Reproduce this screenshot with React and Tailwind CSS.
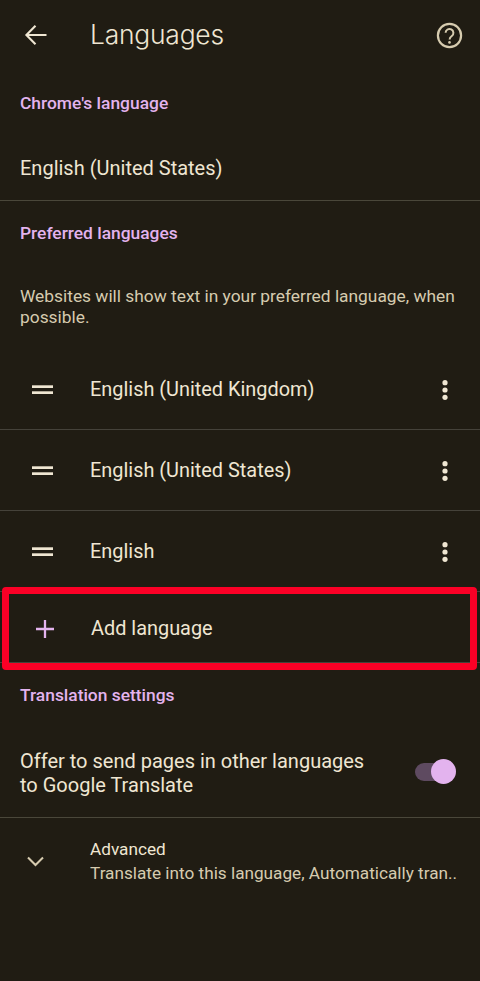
import React from "react";

const SectionTitle = ({ children, className = "" }) => (
  <h2 className={`px-5 text-[17.4px] leading-5 font-medium text-[#e3b3ee] ${className}`}>{children}</h2>
);

const DragHandle = () => (
  <svg width="22" height="10" viewBox="0 0 22 10" fill="#efe6d2">
    <rect x="0" y="0.3" width="21" height="2.7" />
    <rect x="0" y="6.3" width="21" height="2.7" />
  </svg>
);

const MoreIcon = () => (
  <svg width="6" height="20" viewBox="0 0 6 20" fill="#efe6d2">
    <circle cx="3" cy="2.7" r="2.6" />
    <circle cx="3" cy="10" r="2.6" />
    <circle cx="3" cy="17.3" r="2.6" />
  </svg>
);

const LanguageRow = ({ label }) => (
  <div className="h-[81px] flex items-center border-b border-[#45423a] pt-[1px]">
    <div className="w-[90px] pl-[32px] flex items-center">
      <DragHandle />
    </div>
    <span className="flex-1 text-[19.9px] text-[#efe6d2]">{label}</span>
    <div className="pr-[32px] flex items-center">
      <MoreIcon />
    </div>
  </div>
);

const App = () => {
  const languages = ["English (United Kingdom)", "English (United States)", "English"];

  return (
    <div className="relative w-[480px] h-[981px] overflow-hidden bg-[#201c13] font-['Roboto',sans-serif]">
      {/* Toolbar */}
      <div className="h-[70px] flex items-center">
        <div className="w-[90px] pl-[24px] flex items-center">
          <svg width="24" height="24" viewBox="0 0 24 24" fill="none" stroke="#efe6d2" strokeWidth="2.1">
            <path d="M22.5 12H2.5M11.5 2.8L2.4 12l9.1 9.2" />
          </svg>
        </div>
        <h1 className="flex-1 text-[26.4px] text-[#efe6d2] font-['Inter',sans-serif] font-light tracking-[-0.2px]">Languages</h1>
        <div className="pr-[17px] flex items-center">
          <svg width="27" height="27" viewBox="0 0 27 27" fill="none" stroke="#d6cbaf" strokeWidth="2.2">
            <circle cx="13.5" cy="13.5" r="11.6" />
            <path d="M9.6 10.8a3.9 3.9 0 1 1 6.2 3.2c-1.4 1-2.2 1.7-2.2 3.4" strokeWidth="2" />
            <circle cx="13.5" cy="20.4" r="1.3" fill="#d6cbaf" stroke="none" />
          </svg>
        </div>
      </div>

      <SectionTitle className="mt-[23px]">Chrome's language</SectionTitle>
      <div className="h-[88px] flex items-end border-b border-[#4a473a] px-5 pb-[17px]">
        <span className="text-[20px] text-[#efe6d2]">English (United States)</span>
      </div>

      <SectionTitle className="mt-[22px]">Preferred languages</SectionTitle>
      <p className="mt-[43px] px-5 text-[17.35px] leading-[21px] text-[#d6cbaf]">
        Websites will show text in your preferred language, when possible.
      </p>

      <div className="mt-[21px]">
        {languages.map((label) => (
          <LanguageRow key={label} label={label} />
        ))}
      </div>

      {/* Add language */}
      <div className="h-[71px] flex items-center border-b border-[#45423a] pt-[3px]">
        <div className="w-[91px] pl-[36px] flex items-center">
          <svg width="18" height="18" viewBox="0 0 18 18" fill="none" stroke="#e3b3ee" strokeWidth="2.3">
            <path d="M9 0v18M0 9h18" />
          </svg>
        </div>
        <span className="text-[19.9px] text-[#efe6d2]">Add language</span>
      </div>

      <SectionTitle className="mt-[22px]">Translation settings</SectionTitle>

      <div className="mt-[44px] h-[69px] border-b border-[#4a473a] flex items-start px-5">
        <p className="flex-1 text-[20px] leading-6 text-[#efe6d2]">
          Offer to send pages in other languages
          <br />
          to Google Translate
        </p>
        <div className="relative mt-[10px] mr-[4px] w-[41px] h-[25px] flex items-center">
          <div className="h-[18px] w-[36px] rounded-full bg-[#5e4a60]" />
          <div className="absolute right-0 top-0 h-[25px] w-[25px] rounded-full bg-[#e3b3ee]" />
        </div>
      </div>

      {/* Advanced */}
      <div className="flex items-center h-[86px]">
        <div className="w-[90px] pl-[27px] flex items-center">
          <svg width="17" height="11" viewBox="0 0 17 11" fill="none" stroke="#d6cbaf" strokeWidth="2.1">
            <path d="M1 1.5l7.5 7.5L16 1.5" />
          </svg>
        </div>
        <div className="min-w-0 flex-1 pr-[20px]">
          <div className="text-[17.2px] leading-6 text-[#efe6d2]">Advanced</div>
          <div className="text-[17.2px] leading-6 text-[#d6cbaf] whitespace-nowrap overflow-hidden">
            Translate into this language, Automatically tran..
          </div>
        </div>
      </div>

      {/* Red highlight annotation */}
      <div className="absolute left-[2px] top-[587px] w-[475px] h-[83px] border-[7px] border-[#fb0026] rounded-[4px]" />
    </div>
  );
};

export default App;
